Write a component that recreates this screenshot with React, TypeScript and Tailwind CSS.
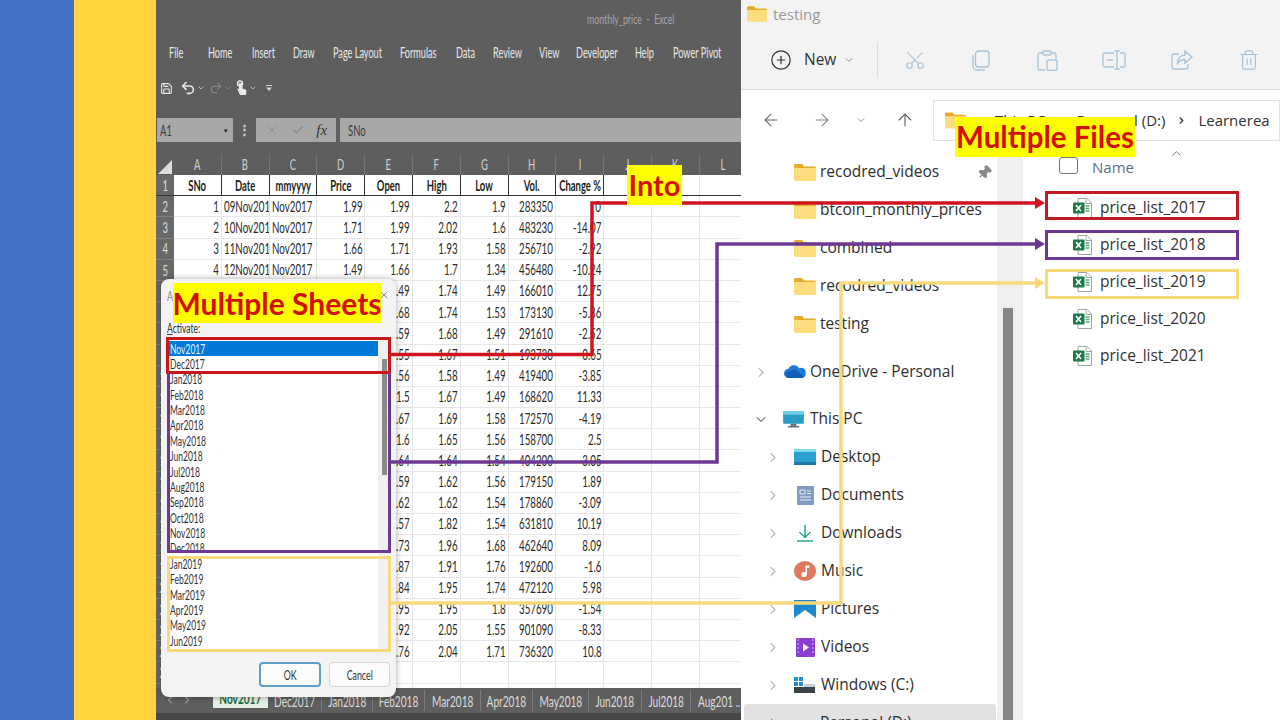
import React from 'react';
import {
  ArrowLeft, ArrowRight, ArrowUp, Check, ChevronDown, ChevronLeft, ChevronRight, ChevronUp,
  CirclePlus, Pin, Save, Scissors, Trash2, Undo2, Redo2, X,
} from 'lucide-react';

const calibri = "font-['Lato',sans-serif]";
const segoe = "font-['Open_Sans',sans-serif]";

const rows = [
  ['1', '09Nov201', 'Nov2017', '1.99', '1.99', '2.2', '1.9', '283350', '0'],
  ['2', '10Nov201', 'Nov2017', '1.71', '1.99', '2.02', '1.6', '483230', '-14.07'],
  ['3', '11Nov201', 'Nov2017', '1.66', '1.71', '1.93', '1.58', '256710', '-2.92'],
  ['4', '12Nov201', 'Nov2017', '1.49', '1.66', '1.7', '1.34', '456480', '-10.24'],
  ['5', '13Nov201', 'Nov2017', '1.68', '1.49', '1.74', '1.49', '166010', '12.75'],
  ['6', '14Nov201', 'Nov2017', '1.59', '1.68', '1.74', '1.53', '173130', '-5.36'],
  ['7', '15Nov201', 'Nov2017', '1.55', '1.59', '1.68', '1.49', '291610', '-2.52'],
  ['8', '16Nov201', 'Nov2017', '1.56', '1.55', '1.67', '1.51', '193730', '0.65'],
  ['9', '17Nov201', 'Nov2017', '1.5', '1.56', '1.58', '1.49', '419400', '-3.85'],
  ['10', '18Nov201', 'Nov2017', '1.67', '1.5', '1.67', '1.49', '168620', '11.33'],
  ['11', '19Nov201', 'Nov2017', '1.6', '1.67', '1.69', '1.58', '172570', '-4.19'],
  ['12', '20Nov201', 'Nov2017', '1.64', '1.6', '1.65', '1.56', '158700', '2.5'],
  ['13', '21Nov201', 'Nov2017', '1.59', '1.64', '1.64', '1.54', '404200', '3.05'],
  ['14', '22Nov201', 'Nov2017', '1.62', '1.59', '1.62', '1.56', '179150', '1.89'],
  ['15', '23Nov201', 'Nov2017', '1.57', '1.62', '1.62', '1.54', '178860', '-3.09'],
  ['16', '24Nov201', 'Nov2017', '1.73', '1.57', '1.82', '1.54', '631810', '10.19'],
  ['17', '25Nov201', 'Nov2017', '1.87', '1.73', '1.96', '1.68', '462640', '8.09'],
  ['18', '26Nov201', 'Nov2017', '1.84', '1.87', '1.91', '1.76', '192600', '-1.6'],
  ['19', '27Nov201', 'Nov2017', '1.95', '1.84', '1.95', '1.74', '472120', '5.98'],
  ['20', '28Nov201', 'Nov2017', '1.92', '1.95', '1.95', '1.8', '357690', '-1.54'],
  ['21', '29Nov201', 'Nov2017', '1.76', '1.92', '2.05', '1.55', '901090', '-8.33'],
  ['22', '30Nov201', 'Nov2017', '1.95', '1.76', '2.04', '1.71', '736320', '10.8'],
];
const headers = ['SNo', 'Date', 'mmyyyy', 'Price', 'Open', 'High', 'Low', 'Vol.', 'Change %'];
const colLetters = ['A', 'B', 'C', 'D', 'E', 'F', 'G', 'H', 'I', 'J', 'K', 'L', 'M'];
const menu = [
  { t: 'Home', w: 'w-[25px]' }, { t: 'Insert', w: 'w-[22px]' }, { t: 'Draw', w: 'w-[21px]' },
  { t: 'Page Layout', w: 'w-[48px]' }, { t: 'Formulas', w: 'w-[37px]' }, { t: 'Data', w: 'w-[18px]' },
  { t: 'Review', w: 'w-[27px]' }, { t: 'View', w: 'w-[18px]' }, { t: 'Developer', w: 'w-[40px]' },
  { t: 'Help', w: 'w-[19px]' }, { t: 'Power Pivot', w: 'w-[47px]' },
];
const tabs = [
  { t: 'Dec2017', w: 'w-[54px]' }, { t: 'Jan2018', w: 'w-[51px]' }, { t: 'Feb2018', w: 'w-[52px]' },
  { t: 'Mar2018', w: 'w-[56px]' }, { t: 'Apr2018', w: 'w-[52px]' }, { t: 'May2018', w: 'w-[56px]' },
  { t: 'Jun2018', w: 'w-[53px]' }, { t: 'Jul2018', w: 'w-[49px]' },
];
const sheets = [
  'Nov2017', 'Dec2017', 'Jan2018', 'Feb2018', 'Mar2018', 'Apr2018', 'May2018', 'Jun2018', 'Jul2018', 'Aug2018',
  'Sep2018', 'Oct2018', 'Nov2018', 'Dec2018', 'Jan2019', 'Feb2019', 'Mar2019', 'Apr2019', 'May2019', 'Jun2019',
];
const files = ['price_list_2017', 'price_list_2018', 'price_list_2019', 'price_list_2020', 'price_list_2021'];

// the excel capture is squeezed sideways, so its text gets squeezed as well
const Sq = ({ children, o = 'origin-center' }: { children: React.ReactNode; o?: string }) => (
  <span className={`inline-block shrink-0 whitespace-nowrap scale-x-[.63] ${o}`}>{children}</span>
);

const FolderIcon = ({ className = 'w-[22px] h-[17px]' }: { className?: string }) => (
  <svg viewBox="0 0 22 17" className={className}>
    <path d="M0 1.500C0 .7.7 0 1.500 0H8l2 2.500h10.500c.8 0 1.500.7 1.500 1.500v3H0z" fill="#e8ab2c" />
    <path d="M0 4h22v11.500c0 .8-.7 1.500-1.500 1.500h-19C.7 17 0 16.300 0 15.500z" fill="#fcdc7c" />
  </svg>
);

const XlsIcon = () => (
  <svg viewBox="0 0 19 20" className="w-[19px] h-[20px] shrink-0">
    <path d="M5 .5h9l4.500 4.500v14.500H5z" fill="#fff" stroke="#9aa5a0" />
    <path d="M13 1.500v4h5" fill="none" stroke="#9aa5a0" />
    <path d="M12.500 8h4M12.500 10.500h4M12.500 13h4" stroke="#5da67f" strokeWidth="1.500" />
    <rect x="0" y="4.500" width="11.500" height="11" rx="1" fill="#1d7a48" />
    <path d="M3 7l5 6M8 7l-5 6" stroke="#fff" strokeWidth="1.600" />
  </svg>
);

const Tree = ({ open = false }: { open?: boolean }) => (
  <span className="w-[16px] flex justify-center shrink-0">
    {open
      ? <ChevronDown size={17} strokeWidth={1.500} className="text-[#333]" />
      : <ChevronRight size={17} strokeWidth={1.500} className="text-[#888]" />}
  </span>
);

const NavRow = ({ icon, label, pl, gap, chevron, open, children, className = '' }: any) => (
  <div className={`h-[38px] flex items-center shrink-0 text-[15.500px] text-[#2e2e2e] whitespace-nowrap ${pl} ${className}`}>
    {chevron && <Tree open={open} />}
    <span className={`flex items-center shrink-0 ${gap}`}>{icon}</span>
    <span>{label}</span>
    {children}
  </div>
);

const Excel = () => (
  <div className={`w-[585px] shrink-0 h-full flex flex-col bg-[#5e5e5e] ${calibri} overflow-hidden`}>
    <div className="h-[36px] shrink-0 flex items-center pl-[431px] pt-[1px] text-[14px] text-[#a5a5a5]">
      <Sq o="origin-left">monthly_price&nbsp; -&nbsp; Excel</Sq>
    </div>
    <div className="h-[34px] shrink-0 flex items-center pl-[13px] text-[14.500px] text-[#e8e8e8]">
      <span className="w-[14px] mr-[25px] flex"><Sq o="origin-left">File</Sq></span>
      <div className="flex gap-[19px]">
        {menu.map((m) => <span key={m.t} className={`flex ${m.w}`}><Sq o="origin-left">{m.t}</Sq></span>)}
      </div>
    </div>
    <div className="h-[36px] shrink-0 flex items-center pl-[4px] text-[#e8e8e8]">
      <Save size={13} strokeWidth={2} />
      <Undo2 size={16} strokeWidth={2.400} className="ml-[7px]" />
      <ChevronDown size={8} className="ml-[1px]" />
      <Redo2 size={14} strokeWidth={1.800} className="ml-[4px] text-[#8d8d8d]" />
      <ChevronDown size={8} className="ml-[1px] text-[#8d8d8d]" />
      <svg viewBox="0 0 12 16" className="w-[12px] h-[16px] ml-[3px]">
        <circle cx="5" cy="3.500" r="2.500" fill="none" stroke="#e8e8e8" strokeWidth="1.500" />
        <path d="M4 3v6L2 8.500 5 15h6l.500-5-4-1.500V3z" fill="#e8e8e8" />
      </svg>
      <ChevronDown size={8} className="ml-[2px]" />
      <svg viewBox="0 0 6 6" className="w-[6px] h-[6px] ml-[9px]">
        <path d="M0 0h6v1H0zM0 2.500h6L3 6z" fill="#d0d0d0" />
      </svg>
    </div>
    <div className="h-[48px] shrink-0 pt-[12px] pb-[12px] flex items-stretch text-[15px] text-[#3d3d3d]">
      <div className="w-[76px] ml-[1px] bg-[#a8a8a8] flex items-center justify-between pl-[3px] pr-[5px]">
        <Sq o="origin-left">A1</Sq><span className="text-[7px] text-[#222]">▾</span>
      </div>
      <div className="w-[23px] flex items-center justify-center text-[#d5d5d5] font-bold text-[13px]">⋮</div>
      <div className="w-[80px] bg-[#a8a8a8] flex items-center justify-around px-[3px] text-[#888]">
        <X size={14} strokeWidth={1.500} />
        <Check size={14} strokeWidth={2} />
        <span className="font-['Liberation_Serif',serif] italic text-[15px] text-[#333]">fx</span>
      </div>
      <div className="flex-1 ml-[4px] bg-[#a8a8a8] flex items-center pl-[8px]"><Sq o="origin-left">SNo</Sq></div>
    </div>
    <div className="h-[21px] shrink-0 flex text-[15px] text-[#cfcfcf]">
      <div className="w-[18px] shrink-0 flex items-end justify-end pr-[2px] pb-[1px]">
        <span className="w-0 h-0 border-l-[14px] border-l-transparent border-b-[14px] border-b-[#dcdcdc]" />
      </div>
      {colLetters.map((c) => (
        <div key={c} className="w-[47.800px] shrink-0 flex items-center justify-center border-r border-[#737373]"><Sq>{c}</Sq></div>
      ))}
    </div>
    <div className="flex-1 min-h-0 overflow-hidden flex flex-col bg-white">
      <div className="h-[21.200px] shrink-0 flex border-b border-[#333] text-[15px] text-[#1c1c1c] font-bold">
        <div className="w-[18px] shrink-0 bg-[#686868] text-[#dedede] font-normal flex items-center justify-center"><Sq>1</Sq></div>
        {headers.map((h) => (
          <div key={h} className="w-[47.800px] shrink-0 flex items-center justify-center border-r border-[#333] overflow-hidden"><Sq>{h}</Sq></div>
        ))}
        {[0, 1, 2, 3].map((i) => <div key={i} className="w-[47.800px] shrink-0 border-r border-[#e8e8e8]" />)}
      </div>
      {rows.map((r, i) => (
        <div key={r[0]} className="h-[21.200px] shrink-0 flex text-[15.500px] text-[#2a2a2a]">
          <div className="w-[18px] shrink-0 bg-[#686868] text-[#dedede] text-[15px] flex items-center justify-center border-b border-[#808080]"><Sq>{i + 2}</Sq></div>
          {r.map((v, j) => (
            <div key={j} className={`w-[47.800px] shrink-0 flex items-center border-r border-b border-[#e6e6e6] overflow-hidden ${j === 1 || j === 2 ? 'justify-start pl-[2px]' : 'justify-end pr-[2px]'}`}>
              <Sq o={j === 1 || j === 2 ? 'origin-left' : 'origin-right'}>{v}</Sq>
            </div>
          ))}
          {[0, 1, 2, 3].map((k) => <div key={k} className="w-[47.800px] shrink-0 border-r border-b border-[#e8e8e8]" />)}
        </div>
      ))}
      {[23, 24, 25].map((n) => (
        <div key={n} className="h-[21.200px] shrink-0 flex">
          <div className="w-[18px] shrink-0 bg-[#686868] text-[#dedede] text-[15px] flex items-center justify-center border-b border-[#808080]"><Sq>{n + 1}</Sq></div>
          {colLetters.map((c) => <div key={c} className="w-[47.800px] shrink-0 border-r border-b border-[#e8e8e8]" />)}
        </div>
      ))}
    </div>
    <div className="h-[25px] shrink-0 flex items-stretch text-[16px] text-[#dcdcdc]">
      <div className="w-[57px] flex items-end pl-[8px] gap-[5px] pb-[7px] text-[#c8c8c8] shrink-0">
        <ChevronLeft size={12} /><ChevronRight size={12} />
      </div>
      <div className="h-[20px] w-[55px] shrink-0 bg-[#e4efe6] text-[#1f6b3e] font-bold flex items-center justify-center"><Sq>Nov2017</Sq></div>
      {tabs.map((t) => (
        <div key={t.t} className={`${t.w} shrink-0 my-[2px] flex items-center justify-center border-r border-[#7c7c7c]`}><Sq>{t.t}</Sq></div>
      ))}
      <div className="pl-[7px] flex items-center"><Sq o="origin-left">Aug201 ..</Sq></div>
    </div>
    <div className="h-[7px] shrink-0 bg-[#474747]" />
  </div>
);

const SelectDialog = () => (
  <div className={`absolute left-[161px] top-[279px] w-[235px] h-[418px] rounded-[8px] bg-[#f3f3f3] shadow-[0_0_6px_rgba(0,0,0,0.35)] flex flex-col px-[6px] ${calibri} text-[#333]`}>
    <div className="h-[32px] shrink-0 flex items-center justify-between text-[14px] text-[#888]">
      <Sq o="origin-left">Activate</Sq>
      <X size={12} />
    </div>
    <div className="h-[27px] shrink-0 flex items-end text-[13.500px]"><Sq o="origin-left"><u>A</u>ctivate:</Sq></div>
    <div className="h-[312px] shrink-0 bg-white flex ml-[1px]">
      <div className="flex-1 pt-[3px] overflow-hidden text-[13.500px] pl-[1px]">
        {sheets.map((s, i) => (
          <div key={s} className={`h-[15.380px] flex items-center pl-[1px] ${i === 0 ? 'bg-[#0078d7] text-[#e8f2ff]' : ''}`}><Sq o="origin-left">{s}</Sq></div>
        ))}
      </div>
      <div className="w-[12px] shrink-0 bg-[#f0f0f0] pt-[21px] flex justify-center">
        <div className="w-[5px] h-[116px] bg-[#8a8a8a]" />
      </div>
    </div>
    <div className="flex-1 flex items-start justify-end gap-[8px] pt-[12px] text-[14px]">
      <div className="w-[62px] h-[25px] rounded-[4px] border-2 border-[#5f9ec9] bg-[#fbfbfb] flex items-center justify-center"><Sq>OK</Sq></div>
      <div className="w-[61px] h-[25px] rounded-[4px] border border-[#d5d5d5] bg-[#fbfbfb] flex items-center justify-center"><Sq>Cancel</Sq></div>
    </div>
  </div>
);

const Explorer = () => (
  <div className={`flex-1 h-full flex flex-col bg-white overflow-hidden ${segoe}`}>
    <div className="h-[90px] shrink-0 bg-[#f3f3f3] border-b border-[#dedede] flex flex-col">
      <div className="h-[28px] flex items-center pl-[6px] gap-[6px] text-[15px] text-[#9a9a9a]">
        <FolderIcon className="w-[20px] h-[16px]" />
        <span>testing</span>
      </div>
      <div className="flex-1 flex items-center pl-[29px] pt-[3px]">
        <CirclePlus size={22} strokeWidth={1.300} className="text-[#333]" />
        <span className="ml-[12px] text-[15.500px] text-[#333]">New</span>
        <ChevronDown size={12} strokeWidth={1.500} className="ml-[7px] text-[#777]" />
        <span className="ml-[22px] h-[36px] w-px bg-[#dcdcdc]" />
        <div className="flex items-center text-[#a8c2d6]">
          <Scissors size={22} strokeWidth={1.300} className="ml-[26px] rotate-[-90deg]" />
          <svg viewBox="0 0 18 21" fill="none" stroke="currentColor" strokeWidth="1.300" className="w-[18px] h-[21px] ml-[46px]">
            <rect x="3.500" y="1" width="13.500" height="16" rx="3" />
            <path d="M1 5v11a4 4 0 0 0 4 4h8" />
          </svg>
          <svg viewBox="0 0 21 21" fill="none" stroke="currentColor" strokeWidth="1.300" className="w-[21px] h-[21px] ml-[47px]">
            <path d="M6 3H3a2 2 0 0 0-2 2v13a2 2 0 0 0 2 2h5M14 3h3a2 2 0 0 1 2 2v4" />
            <rect x="6" y="1" width="8" height="4" rx="1" />
            <rect x="10" y="10" width="10" height="10.500" rx="2" />
          </svg>
          <svg viewBox="0 0 24 20" fill="none" stroke="currentColor" strokeWidth="1.300" className="w-[24px] h-[20px] ml-[44px]">
            <path d="M12 3H2.500A1.500 1.500 0 0 0 1 4.500v11A1.500 1.500 0 0 0 2.500 17H12M18 3h3.500A1.500 1.500 0 0 1 23 4.500v11a1.500 1.500 0 0 1-1.500 1.500H18M15 1v18M12.500 1h5M12.500 19h5M5 10h6" />
          </svg>
          <svg viewBox="0 0 22 20" fill="none" stroke="currentColor" strokeWidth="1.300" className="w-[22px] h-[20px] ml-[45px]">
            <path d="M8 4H3a2 2 0 0 0-2 2v11a2 2 0 0 0 2 2h12a2 2 0 0 0 2-2v-3" />
            <path d="M14 1l7 6-7 6V9.500c-4 0-6 1.500-7.500 4 0-5 3-8.500 7.500-8.500z" />
          </svg>
          <Trash2 size={22} strokeWidth={1.300} className="ml-[45px]" />
        </div>
      </div>
    </div>
    <div className="h-[59px] shrink-0 flex items-center pl-[20px] pt-[1px]">
      <ArrowLeft size={20} strokeWidth={1.300} className="text-[#666]" />
      <ArrowRight size={20} strokeWidth={1.300} className="ml-[31px] text-[#888]" />
      <ChevronDown size={12} strokeWidth={1.500} className="ml-[23px] text-[#777]" />
      <ArrowUp size={20} strokeWidth={1.300} className="ml-[28px] text-[#555]" />
      <div className="ml-[18px] flex-1 h-[41px] border border-[#e4e4e4] flex items-center pl-[11px] text-[15px] text-[#333] whitespace-nowrap overflow-hidden">
        <FolderIcon className="w-[21px] h-[17px] shrink-0" />
        <span className="ml-[29px]">This PC</span>
        <ChevronRight size={11} className="mx-[10px] shrink-0" />
        <span>Personal (D:)</span>
        <ChevronRight size={11} strokeWidth={2.500} className="mx-[11px] shrink-0" />
        <span>Learnerea</span>
      </div>
    </div>
    <div className="flex-1 min-h-0 flex">
      <div className="w-[256px] shrink-0 flex flex-col pt-[4px] overflow-hidden">
        <NavRow pl="pl-[53px]" gap="w-[26px]" icon={<FolderIcon />} label="recodred_videos">
          <Pin size={15} className="ml-auto mr-[5px] rotate-45 text-[#8a8a8a] fill-[#8a8a8a]" />
        </NavRow>
        <NavRow pl="pl-[53px]" gap="w-[26px]" icon={<FolderIcon />} label="btcoin_monthly_prices" />
        <NavRow pl="pl-[53px]" gap="w-[26px]" icon={<FolderIcon />} label="combined" />
        <NavRow pl="pl-[53px]" gap="w-[26px]" icon={<FolderIcon />} label="recodred_videos" />
        <NavRow pl="pl-[53px]" gap="w-[26px]" icon={<FolderIcon />} label="testing" />
        <NavRow className="mt-[10px] ml-[12px]" pl="" gap="w-[41px] pl-[14px]" chevron icon={(
          <svg viewBox="0 0 24 15" className="w-[23px] h-[14px]">
            <path d="M6 14a5 5 0 0 1-.500-10A6.500 6.500 0 0 1 17 3.500 5 5 0 0 1 24 9c0 3-2 5-4.500 5z" fill="#1f7ad6" />
            <path d="M6 14a3.500 3.500 0 0 1 .500-7L12 4.500 22 12c-.700 1.300-1.500 2-3 2z" fill="#0f5fb8" />
          </svg>
        )} label="OneDrive - Personal" />
        <NavRow className="mt-[9px] ml-[12px]" pl="" gap="w-[41px] pl-[14px]" chevron open icon={(
          <svg viewBox="0 0 22 18" className="w-[21px] h-[17px]">
            <rect x="0" y="0" width="22" height="13.500" rx="1" fill="#2d9cc4" />
            <rect x="0" y="0" width="22" height="4" rx="1" fill="#6fd0e6" />
            <path d="M8 13.500h6v2.500h3v1.500H5V16h3z" fill="#66727a" />
          </svg>
        )} label="This PC" />
        <NavRow pl="pl-[24px]" chevron gap="w-[40px] pl-[13px]" icon={(
          <svg viewBox="0 0 22 16" className="w-[22px] h-[16px]">
            <rect width="22" height="16" rx="1" fill="#2a9fd0" />
            <rect width="22" height="3" fill="#7fdcf0" />
            <rect y="13" width="22" height="3" fill="#1f78a8" />
          </svg>
        )} label="Desktop" />
        <NavRow pl="pl-[24px]" chevron gap="w-[40px] pl-[16px]" icon={(
          <svg viewBox="0 0 17 19" className="w-[17px] h-[19px]">
            <rect width="17" height="19" rx="1" fill="#7f9dc4" />
            <path d="M3 4h5v4H3zM10 5h4M10 7.500h4M3 11h11M3 14h11" stroke="#e8eef6" fill="none" />
          </svg>
        )} label="Documents" />
        <NavRow pl="pl-[24px]" chevron gap="w-[40px] pl-[16px]" icon={(
          <svg viewBox="0 0 16 17" fill="none" stroke="#28a88f" strokeWidth="1.500" className="w-[16px] h-[17px]">
            <path d="M8 0v12M2.500 7L8 12.500 13.500 7M0 16h16" />
          </svg>
        )} label="Downloads" />
        <NavRow pl="pl-[24px]" chevron gap="w-[40px] pl-[13px]" icon={(
          <svg viewBox="0 0 22 20" className="w-[22px] h-[20px]">
            <ellipse cx="11" cy="10" rx="11" ry="10" fill="#dd7a5e" />
            <path d="M11.500 13.500V4.500h4v2.300h-2.500v6.700z" fill="#fff" />
            <circle cx="10" cy="13.500" r="2.600" fill="#fff" />
          </svg>
        )} label="Music" />
        <NavRow pl="pl-[24px]" chevron gap="w-[40px] pl-[13px]" icon={(
          <svg viewBox="0 0 22 18" className="w-[22px] h-[18px]">
            <rect width="22" height="18" fill="#1d87c9" />
            <path d="M0 18l11-8 11 8z" fill="#fff" />
          </svg>
        )} label="Pictures" />
        <NavRow pl="pl-[24px]" chevron gap="w-[40px] pl-[15px]" icon={(
          <svg viewBox="0 0 19 19" className="w-[19px] h-[19px]">
            <rect width="19" height="19" rx="1" fill="#8a3fd1" />
            <path d="M7 5.500l6 4-6 4z" fill="#fff" />
            <path d="M1.500 2h1.500M1.500 6h1.500M1.500 10h1.500M1.500 14h1.500M16 2h1.500M16 6h1.500M16 10h1.500M16 14h1.500" stroke="#e6d5f7" />
          </svg>
        )} label="Videos" />
        <NavRow pl="pl-[24px]" chevron gap="w-[40px] pl-[13px]" icon={(
          <svg viewBox="0 0 21 16" className="w-[21px] h-[16px]">
            <path d="M0 10h21v6H0z" fill="#3a4348" />
            <path d="M10 7h11v3H10z" fill="#c9d0d4" />
            <path d="M0 0h4v4H0zM5 0h4v4H5zM0 5h4v4H0zM5 5h4v4H5z" fill="#1d8ecf" />
          </svg>
        )} label="Windows (C:)" />
        <div className="h-[38px] shrink-0 ml-[3px] mr-[1px] bg-[#e2e2e2] rounded-[3px] flex items-center pl-[21px] text-[15.500px] text-[#2e2e2e]">
          <ChevronRight size={17} strokeWidth={1.500} className="text-[#888]" />
          <span className="ml-[38px]">Personal (D:)</span>
        </div>
      </div>
      <div className="w-[25px] shrink-0 bg-[#f0f0f0] pt-[159px] pl-[6px] pr-[9px]">
        <div className="w-[10px] h-full bg-[#868686]" />
      </div>
      <div className="flex-1 border-l border-[#ececec] pl-[36px] relative">
        <ChevronUp size={15} strokeWidth={1.300} className="absolute left-[146px] -top-[3px] text-[#666]" />
        <div className="h-[40px] flex items-start pt-[8px]">
          <span className="w-[19px] h-[17px] rounded-[3px] border border-[#777]" />
          <span className="ml-[14px] -mt-[1px] text-[15px] text-[#5d7183]">Name</span>
        </div>
        <div className="pl-[14px] flex flex-col">
          {files.map((f) => (
            <div key={f} className="h-[37px] flex items-center gap-[8px] text-[15.500px] text-[#333]">
              <XlsIcon />
              <span>{f}</span>
            </div>
          ))}
        </div>
      </div>
    </div>
  </div>
);

const Label = ({ text, className }: { text: string; className: string }) => (
  <div className={`absolute bg-[#ffff00] text-[#d40f00] font-bold flex items-center justify-center whitespace-nowrap font-['Lato',sans-serif] ${className}`}>{text}</div>
);

const Connectors = () => (
  <svg viewBox="0 0 1280 720" className="absolute inset-0 w-[1280px] h-[720px] pointer-events-none" fill="none" strokeWidth="3.500">
    <path d="M391 354.500H592V203H1036" stroke="#cf1420" />
    <path d="M1035 197l10 6-10 6z" fill="#cf1420" />
    <path d="M390 462H717V244H1036" stroke="#6d3894" />
    <path d="M1035 238l10 6-10 6z" fill="#6d3894" />
    <path d="M390 603H841V283H1036" stroke="#f8da7a" />
    <path d="M1035 277l10 6-10 6z" fill="#f8da7a" />
  </svg>
);

export default function App() {
  return (
    <div className="relative w-[1280px] h-[720px] overflow-hidden flex bg-white">
      <div className="w-[74px] shrink-0 bg-[#4472c4]" />
      <div className="w-[82px] shrink-0 bg-[#ffd43f]" />
      <Excel />
      <Explorer />
      <SelectDialog />
      <Connectors />
      {/* marker boxes round the sheet list and the file names */}
      <div className="absolute left-[166px] top-[337px] w-[225px] h-[37px] border-[3.500px] border-[#c8161d]" />
      <div className="absolute left-[167px] top-[373px] w-[224px] h-[180px] border-[3.500px] border-t-0 border-[#6d3894]" />
      <div className="absolute left-[167px] top-[556px] w-[224px] h-[96px] border-[3.500px] border-[#f8da7a]" />
      <div className="absolute left-[1045px] top-[191px] w-[194px] h-[29px] border-[3.500px] border-[#c01c26]" />
      <div className="absolute left-[1045px] top-[230px] w-[194px] h-[30px] border-[3.500px] border-[#6d3894]" />
      <div className="absolute left-[1045px] top-[269px] w-[194px] h-[30px] border-[3.500px] border-[#f8da7a]" />
      <Label text="Multiple Sheets" className="left-[173px] top-[283px] w-[208px] h-[40px] text-[30px]" />
      <Label text="Multiple Files" className="left-[955px] top-[117px] w-[180px] h-[40px] text-[29.500px]" />
      <Label text="Into" className="left-[627px] top-[165px] w-[55px] h-[40px] text-[29px]" />
    </div>
  );
}
